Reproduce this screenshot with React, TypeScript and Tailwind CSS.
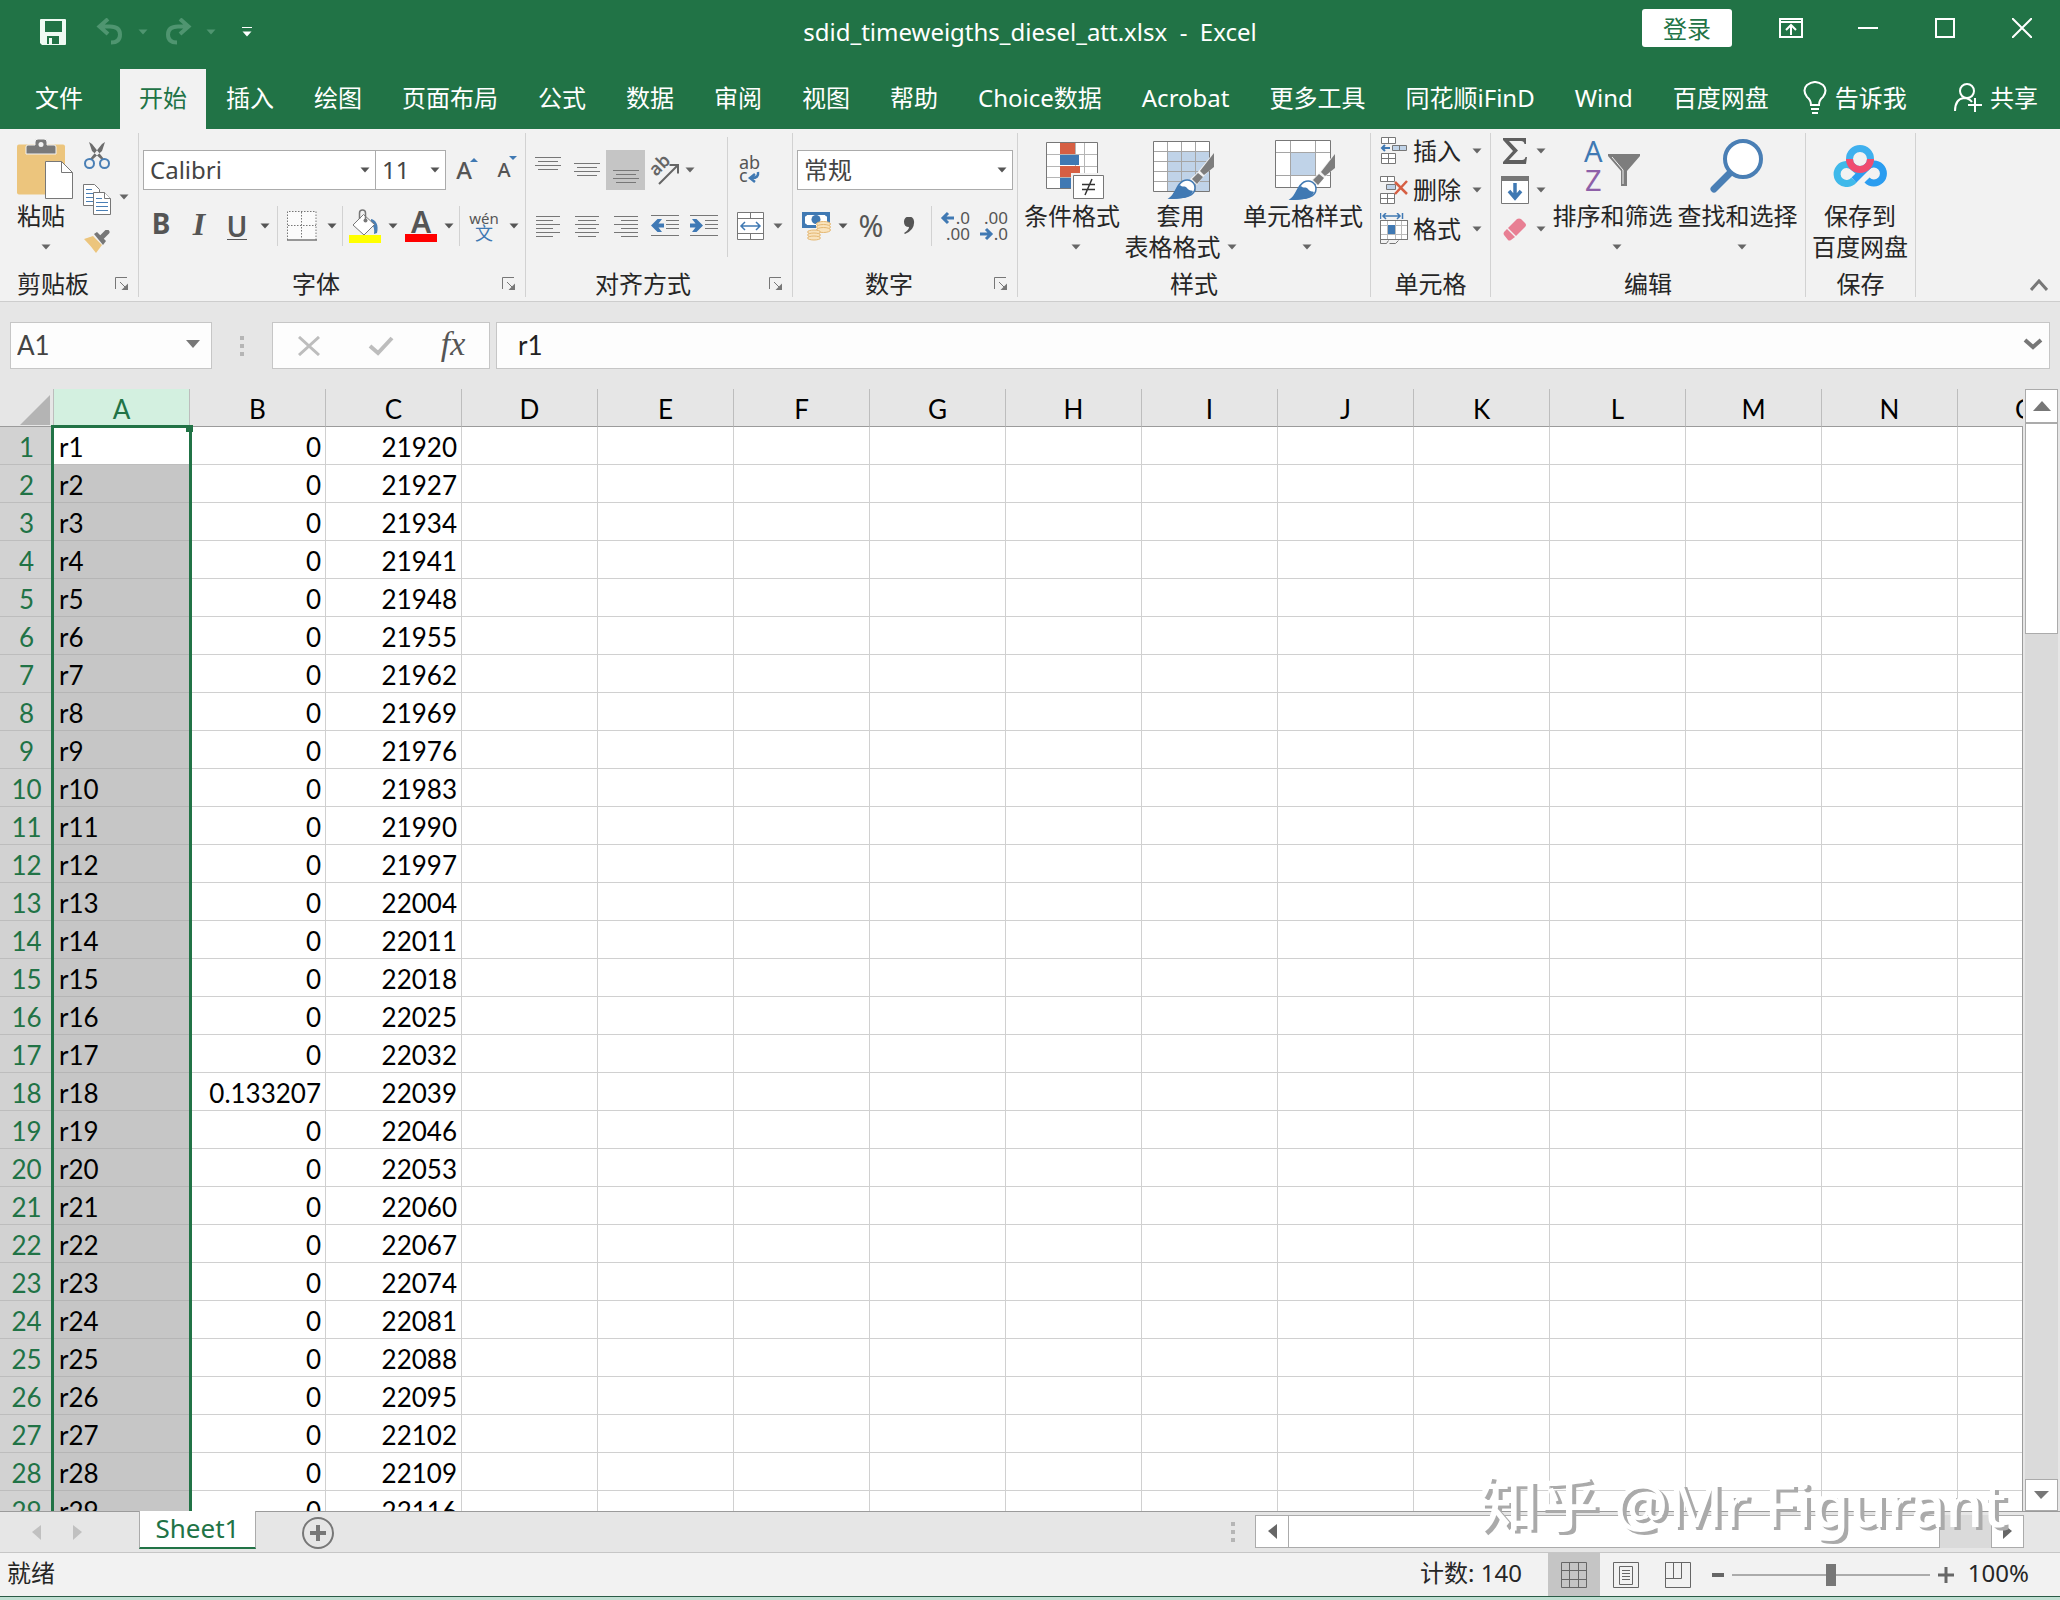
import type { ReactNode } from 'react'
import clsx from 'clsx'

const TABS = [
    '插入',
    '绘图',
    '页面布局',
    '公式',
    '数据',
    '审阅',
    '视图',
    '帮助',
    'Choice数据',
    'Acrobat',
    '更多工具',
    '同花顺iFinD',
    'Wind',
    '百度网盘',
]

const COLUMNS = ['A', 'B', 'C', 'D', 'E', 'F', 'G', 'H', 'I', 'J', 'K', 'L', 'M', 'N', 'O']

/* Weekly dates as serial numbers, one weight per row */
const ROWS = Array.from({ length: 29 }, (_, i) => ({
    name: `r${i + 1}`,
    weight: i === 17 ? '0.133207' : '0',
    date: String(21920 + i * 7),
}))

/**
 * Small down arrow used for all drop-downs.
 */
function Caret({ className }: { className?: string }) {
    return (
        <svg width="10" height="6" viewBox="0 0 10 6" className={clsx('shrink-0', className)} aria-hidden="true">
            <path d="M0.5 0.5h9L5 5.5z" fill="currentColor" />
        </svg>
    )
}

function Separator({ className }: { className?: string }) {
    return <div className={clsx('h-10 w-px shrink-0 bg-[#d2d2d2]', className)} />
}

/**
 * A small ribbon button.
 */
function Tool({ label, className, children }: { label: string; className?: string; children: ReactNode }) {
    return (
        <button type="button" aria-label={label} className={clsx('flex h-10 shrink-0 items-center justify-center', className)}>
            {children}
        </button>
    )
}

/**
 * A tall ribbon button with an icon and two lines below it.
 */
function BigTool({ icon, className, children }: { icon: ReactNode; className?: string; children: ReactNode }) {
    return (
        <button type="button" className={clsx('flex shrink-0 flex-col items-center leading-[31px] whitespace-nowrap', className)}>
            <span className="flex h-[63px] items-center justify-center">{icon}</span>
            {children}
        </button>
    )
}

function CaretLine() {
    return (
        <span className="flex h-[31px] items-center pl-2 text-[#666]">
            <Caret />
        </span>
    )
}

/**
 * A named section of the ribbon.
 */
function Group({
    title,
    launcher = false,
    className,
    children,
}: {
    title: string
    launcher?: boolean
    className?: string
    children: ReactNode
}) {
    return (
        <section aria-label={title} className={clsx('flex shrink-0 flex-col border-r border-[#d2d2d2]', className)}>
            <div className="flex h-[134px]">{children}</div>
            <div className="flex h-[30px] items-center pt-1 leading-[26px]">
                <h2 className="flex-1 text-center text-[#262626]">{title}</h2>
                {launcher && (
                    <button type="button" aria-label={`${title}设置`} className="flex w-8 justify-center">
                        <svg width="14" height="14" viewBox="0 0 14 14" fill="none" stroke="#777" aria-hidden="true">
                            <path d="M0.5 12V0.5H12M5 5l6 6" />
                            <path d="M13 6.5V13H6.5z" fill="#777" stroke="none" />
                        </svg>
                    </button>
                )}
            </div>
        </section>
    )
}

function Combo({ label, value, className }: { label: string; value: string; className?: string }) {
    return (
        <div className={clsx('relative h-10 border border-[#ababab] bg-white', className)}>
            <select aria-label={label} defaultValue={value} className="h-full w-full appearance-none bg-transparent pl-[6px] text-[#444] outline-none">
                <option>{value}</option>
            </select>
            <Caret className="pointer-events-none absolute top-4 right-[5px]" />
        </div>
    )
}

/* Horizontal strokes given as [x1, x2, y] */
function Lines({ lines }: { lines: number[][] }) {
    return (
        <svg width="26" height="26" viewBox="0 0 26 26" stroke="#777" aria-hidden="true">
            {lines.map(([x1, x2, y]) => (
                <path key={y} d={`M${x1} ${y}.5H${x2}`} />
            ))}
        </svg>
    )
}

function IndentIcon({ inward = false }: { inward?: boolean }) {
    return (
        <svg width="28" height="22" viewBox="0 0 28 22" aria-hidden="true">
            <path d="M0 .5h28M15 5.5h13M15 9.5h13M15 13.5h13M0 20.5h28" stroke="#777" />
            {inward ? (
                <path d="M0 8.5h5.500L2 4h4.500L13 10.500 6.500 17H2l3.500-4.500H0z" fill="#3f79b5" />
            ) : (
                <path d="M13 8.500H7.500L11 4H6.500L0 10.500 6.500 17H11l-3.500-4.500H13z" fill="#3f79b5" />
            )}
        </svg>
    )
}

function Brush() {
    return (
        <g>
            <path d="M61 11v14L50 36l-6 8-7-6 7-6z" fill="#f2f2f2" />
            <path d="M61 12v14L51 34l-4-4z" fill="#7d7d7d" />
            <path d="M45 32l5 4-6 7-5-5z" fill="#7d7d7d" />
            <path d="M17 57c6-4 6-13 13-17 6-3 12 1 12 7 0 8-9 10-25 10z" fill="#fff" stroke="#4079b3" strokeWidth="1.500" />
            <path d="M15 58c8-4 7-12 12-14 2 3 5 0 7 3 2 3 4 2 6 3-2 7-12 8-25 8z" fill="#4079b3" />
        </g>
    )
}

function PasteIcon() {
    return (
        <svg width="56" height="60" viewBox="0 0 56 60" aria-hidden="true">
            <rect y="5.500" width="48" height="50" rx="2" fill="#ecc57d" />
            <path d="M9 15V8q0-2 2-2h7V3q0-3 3-3h6q3 0 3 3v3h7q2 0 2 2v7z" fill="#7a7a7a" stroke="#f2f2f2" />
            <circle cx="24" cy="5.500" r="2.500" fill="#f2f2f2" />
            <path d="M28.500 22.500h16l11 11v26h-27z" fill="#fff" stroke="#777" />
            <path d="M44.500 22.500v11h11" fill="none" stroke="#777" />
        </svg>
    )
}

function CutIcon() {
    return (
        <svg width="26" height="29" viewBox="0 0 26 29" fill="none" aria-hidden="true">
            <path d="M5 1l3 9 10 9 2-1L8 3zM21 1l-3 9-10 9-2-1L18 3z" fill="#6d6d6d" />
            <circle cx="5.500" cy="22.500" r="4.500" stroke="#4a7fb5" strokeWidth="2" />
            <circle cx="20.500" cy="22.500" r="4.500" stroke="#4a7fb5" strokeWidth="2" />
        </svg>
    )
}

function CopyIcon() {
    return (
        <svg width="28" height="31" viewBox="0 0 28 31" fill="#fff" stroke="#777" aria-hidden="true">
            <path d="M.5.500h11l5 5v16H.5z" />
            <path d="M3 5.500h6M3 9.500h7M3 13.500h7M3 17.500h7" stroke="#4a7fb5" />
            <path d="M10.500 8.500h11l6 6v16h-17z" />
            <path d="M21.500 8.500v6h6" />
            <path d="M13 14.500h6M13 18.500h12M13 22.500h12M13 26.500h12" stroke="#4a7fb5" />
        </svg>
    )
}

function PainterIcon() {
    return (
        <svg width="26" height="23" viewBox="0 0 26 23" aria-hidden="true">
            <path d="M0 9l9-3 9 9-6 8q-5-7-12-14z" fill="#ecc57d" />
            <path d="M10 4l3-2 9 9-3 4z" fill="#777" />
            <path d="M17 8l6-6" stroke="#777" strokeWidth="5" strokeLinecap="round" />
        </svg>
    )
}

function FontSizeIcon({ grow = false }: { grow?: boolean }) {
    return (
        <span className={clsx('flex items-end pl-0.5 font-medium text-[#555]', grow ? 'text-2xl' : 'text-xl')}>
            A
            <svg width="8" height="28" viewBox="0 0 8 28" className="-ml-0.5" aria-hidden="true">
                <path d={grow ? 'M0 4l4-4 4 4z' : 'M0 0h8L4 4z'} fill="#4079b3" />
            </svg>
        </span>
    )
}

function BorderIcon() {
    return (
        <svg width="30" height="30" viewBox="0 0 30 30" aria-hidden="true">
            <path d="M.5.500h29v28H.5z" fill="#fbfbfb" />
            <path d="M.5 29V.500h28.500V29M14.500 1v27M1 14.500h28" fill="none" stroke="#777" strokeDasharray="1.500 1.500" />
            <path d="M0 29h30" stroke="#777" strokeWidth="1.500" />
        </svg>
    )
}

function FillIcon() {
    return (
        <svg width="32" height="34" viewBox="0 0 32 34" aria-hidden="true">
            <path d="M22 10c5 1 8 6 6 14l-3 1q1-7-3-11z" fill="#4a7fb5" />
            <path d="M14.500 5.500l11 10L15 26 4 16z" fill="#fff" stroke="#777" />
            <path d="M10.500 10V4q0-3 3-3 3 0 3 3v7" fill="none" stroke="#777" strokeWidth="1.500" />
            <circle cx="16.500" cy="11.500" r="2" fill="#777" />
            <path d="M0 26h32v8H0z" fill="#ff0" />
        </svg>
    )
}

function OrientationIcon() {
    return (
        <svg width="30" height="30" viewBox="0 0 30 30" className="overflow-visible" aria-hidden="true">
            <text x="6" y="22" transform="rotate(-45 6 22)" fontSize="18" fontWeight="600" fill="#666">
                ab
            </text>
            <path d="M9 29L28 10M19.500 10H28v8.500" fill="none" stroke="#666" strokeWidth="2" />
        </svg>
    )
}

function WrapIcon() {
    return (
        <svg width="22" height="30" viewBox="0 0 22 30" className="overflow-visible" aria-hidden="true">
            <text x="0" y="14" fontSize="18" fill="#555">
                ab
            </text>
            <text x="0" y="27" fontSize="18" fill="#555">
                c
            </text>
            <path d="M19 17q1 6-6 6M16 19l-5 4 5 4" fill="none" stroke="#4079b3" strokeWidth="2.500" />
        </svg>
    )
}

function MergeIcon() {
    return (
        <svg width="27" height="28" viewBox="0 0 27 28" aria-hidden="true">
            <path d="M.5.500h26v27H.500zM.5 6.500h26M.5 21.500h26M13.500.500v6M13.500 21.500v6" fill="#fff" stroke="#777" />
            <path d="M4 14h19M8 10l-4 4 4 4M19 10l4 4-4 4" fill="none" stroke="#4079b3" strokeWidth="1.500" />
        </svg>
    )
}

function MoneyIcon() {
    return (
        <svg width="30" height="30" viewBox="0 0 30 30" aria-hidden="true">
            <path d="M1.500 2.500h25v13h-25z" fill="#fff" stroke="#4079b3" strokeWidth="3" />
            <path d="M1 2h5q-1 4-5 4zM27 2h-5q1 4 5 4zM1 16h5q-1-4-5-4z" fill="#4079b3" />
            <circle cx="14" cy="8.500" r="4.500" fill="#4079b3" />
            <path d="M14 12h15v12H14z" fill="#f2f2f2" />
            {[13, 16, 19].map((y) => (
                <ellipse key={y} cx="21.500" cy={y} rx="7" ry="2.500" fill="#f9e3bd" stroke="#e5b873" />
            ))}
            {[21, 24, 27].map((y) => (
                <ellipse key={y} cx="12" cy={y} rx="6.500" ry="2" fill="#f9e3bd" stroke="#e5b873" />
            ))}
        </svg>
    )
}

function DecimalIcon({ increase = false }: { increase?: boolean }) {
    return (
        <svg width="30" height="30" viewBox="0 0 30 30" fontSize="17" fill="#555" className="overflow-visible" aria-hidden="true">
            <text x="29" y="13" textAnchor="end">
                {increase ? '.0' : '.00'}
            </text>
            <text x="29" y="29" textAnchor="end">
                {increase ? '.00' : '.0'}
            </text>
            {increase ? (
                <path d="M13 7H3M7 2L2 7l5 5" fill="none" stroke="#4079b3" strokeWidth="3" />
            ) : (
                <path d="M1 23h10M7 18l5 5-5 5" fill="none" stroke="#4079b3" strokeWidth="3" />
            )}
        </svg>
    )
}

function ConditionalIcon() {
    return (
        <svg width="58" height="58" viewBox="0 0 58 58" className="mt-1 ml-1.5" aria-hidden="true">
            <path d="M.5.500h51v46H.500z" fill="#fff" />
            <path d="M29.500 1v45M38.500 1v45M1 12.500h50M1 24.500h50M1 35.500h50" stroke="#b5b5b5" />
            <path d="M14 1h15v11H14zM14 24h20v11H14z" fill="#d65f43" />
            <path d="M14 13h19v10H14zM14 36h14v10H14z" fill="#4079b3" />
            <path d="M.5.500h51v46H.500z" fill="none" stroke="#777" />
            <path d="M25 31h34v28H25z" fill="#f2f2f2" />
            <path d="M27.500 33.500h30v23h-30z" fill="#fff" stroke="#777" />
            <path d="M36 42.500h13M36 47.500h13M46 37l-7 16" stroke="#333" strokeWidth="1.500" />
        </svg>
    )
}

function TableFormatIcon() {
    return (
        <svg width="62" height="60" viewBox="0 0 62 60" className="mt-1 ml-1.5" aria-hidden="true">
            <path d="M.5.500h56v50H.500z" fill="#fff" />
            <path d="M14.500 10.500h42v40h-42z" fill="#c0d3e8" />
            <path d="M.5 10.500h56M.5 20.500h56M.5 30.500h56M.5 40.500h56M14.500.500v50M28.500.500v50M42.500.500v50" stroke="#a5a5a5" />
            <path d="M.5.500h56v50H.500z" fill="none" stroke="#777" />
            <Brush />
        </svg>
    )
}

function CellStyleIcon() {
    return (
        <svg width="62" height="62" viewBox="0 0 62 62" className="mt-1 ml-1.5" aria-hidden="true">
            <path d="M.5.500h55v47H.500z" fill="#fff" />
            <path d="M15.500 12.500h25v23h-25z" fill="#c0d3e8" />
            <path d="M.5 12.500h55M.5 35.500h55M15.500.500v47M40.500.500v47" stroke="#a5a5a5" />
            <path d="M.5.500h55v47H.500z" fill="none" stroke="#777" />
            <g transform="translate(-1 2)">
                <Brush />
            </g>
        </svg>
    )
}

function InsertCellsIcon() {
    return (
        <svg width="28" height="28" viewBox="0 0 28 28" fill="#fff" stroke="#777" aria-hidden="true">
            <path d="M1.500.500h14v6h-14zM8.500.500v6M1.500 16.500h14v10h-14zM8.500 16.500v10M1.500 21.500h14" />
            <path d="M12.500 8.500h14v5h-14zM19.500 8.500v5" fill="#c0d3e8" />
            <path d="M2 11h8M5 8l-3 3 3 3" fill="none" stroke="#4079b3" strokeWidth="2" />
        </svg>
    )
}

function DeleteCellsIcon() {
    return (
        <svg width="28" height="28" viewBox="0 0 28 28" fill="#fff" stroke="#777" aria-hidden="true">
            <path d="M.5.500h14v5H.500zM7.500.500v5M.5 17.500h14v10H.500zM7.500 17.500v10M.5 22.500h14" />
            <path d="M6.500 8.500h9v5h-9z" fill="#c0d3e8" />
            <path d="M15 6l12 12M27 5L15 18" stroke="#d65f43" strokeWidth="2.500" />
        </svg>
    )
}

function FormatCellsIcon() {
    return (
        <svg width="28" height="32" viewBox="0 0 28 32" fill="#fff" stroke="#777" aria-hidden="true">
            <path d="M.5 7.500h27v19H.500z" />
            <path d="M.5 12.500h27M.5 21.500h27M7.500 7.500v19M15.500 7.500v19M21.500 7.500v19" stroke="#bbb" />
            <path d="M.5 7.500h27v19H.500zM.5 26.500v4h6l2-3M9.500 30.500h6l3-3" fill="none" />
            <path d="M8 12h7v9H8z" fill="#4079b3" stroke="none" />
            <path d="M.5 0v6M22.500 0v6M3 3h17M6 0L3 3l3 3M17 0l3 3-3 3" fill="none" stroke="#4079b3" strokeWidth="1.500" />
        </svg>
    )
}

function SumIcon() {
    return (
        <svg width="24" height="26" viewBox="0 0 24 26" aria-hidden="true">
            <path d="M0 0h23v6h-1.500Q21 3 18 3H6l9 9.500L6 22h13q3 0 3.500-3H24l-1 7H0v-2l10-11L0 2z" fill="#5f5f5f" />
        </svg>
    )
}

function FillDownIcon() {
    return (
        <svg width="28" height="28" viewBox="0 0 28 28" aria-hidden="true">
            <path d="M.5.500h27v27H.500z" fill="#fff" stroke="#777" />
            <path d="M0 0h28v5H0z" fill="#777" />
            <path d="M14 7v14M8 15l6 7 6-7" fill="none" stroke="#4079b3" strokeWidth="3.500" />
        </svg>
    )
}

function EraserIcon() {
    return (
        <svg width="24" height="23" viewBox="0 0 24 23" fill="#e87f93" aria-hidden="true">
            <path d="M14 1q2-1 4 0l4 4q2 2 0 4l-9 9-8-8z" />
            <path d="M4 11l8 8-4 3q-2 1-3 0l-4-5q-1-1 0-3z" />
        </svg>
    )
}

function SortFilterIcon() {
    return (
        <svg width="56" height="54" viewBox="0 0 56 54" className="mr-0.5 mb-1 overflow-visible" aria-hidden="true">
            <text x="0" y="22" fontSize="29" fill="#4079b3">
                A
            </text>
            <text x="1" y="51" fontSize="29" fill="#8e60a8">
                Z
            </text>
            <path d="M24 14h32v2L43 31v15h-6V31L24 16z" fill="#7d7d7d" />
            <path d="M28 17l11 13v14" fill="none" stroke="#f2f2f2" />
        </svg>
    )
}

function FindIcon() {
    return (
        <svg width="54" height="54" viewBox="0 0 54 54" className="mr-0.5 mb-1.5" aria-hidden="true">
            <path d="M22 32L4 50" stroke="#4a7fb5" strokeWidth="7" strokeLinecap="round" />
            <circle cx="33" cy="20" r="18" fill="#fff" stroke="#4a7fb5" strokeWidth="4" />
        </svg>
    )
}

function NetdiskIcon() {
    return (
        <svg width="54" height="42" viewBox="0 0 54 42" fill="none" strokeWidth="7" className="mb-1.5" aria-hidden="true">
            <path d="M21 35a9.500 9.500 0 1 1-1-13l8 7" stroke="#3fb9ea" />
            <path d="M34 35a9.500 9.500 0 1 0 0-13L21 35" stroke="#2b9df0" />
            <circle cx="27" cy="14" r="10.500" stroke="#3fb0ee" />
            <path d="M16.500 14a10.500 10.500 0 0 0 21 0" stroke="#f04c70" />
        </svg>
    )
}

function HistoryIcon() {
    return (
        <svg width="28" height="28" viewBox="0 0 28 28" fill="none" stroke="#4f9570" strokeWidth="4" aria-hidden="true">
            <path d="M12 1L3.500 8.500 12 16M4 8.500h10q10 0 10 8t-9 8" />
        </svg>
    )
}

function TitleBar() {
    return (
        <header className="grid h-[69px] grid-cols-[1fr_auto_1fr] text-white">
            <div className="flex h-16 items-center pl-10">
                <button type="button" aria-label="保存" className="mr-[30px]">
                    <svg width="26" height="26" viewBox="0 0 26 26" aria-hidden="true">
                        <path d="M1 0h24q1 0 1 1v24q0 1-1 1H2l-2-2V1q0-1 1-1z" fill="#effaf3" />
                        <path d="M5 2h17v11H5zM7 17h12v8h-7v-6H9v6H7z" fill="#217346" />
                    </svg>
                </button>
                <button type="button" aria-label="撤消" className="mr-4 flex items-center gap-[14px] text-[#4f9570]">
                    <HistoryIcon />
                    <Caret />
                </button>
                <button type="button" aria-label="恢复" className="mr-6 flex items-center gap-[14px] text-[#4f9570]">
                    <span className="-scale-x-100">
                        <HistoryIcon />
                    </span>
                    <Caret />
                </button>
                <button type="button" aria-label="自定义快速访问工具栏" className="flex flex-col items-center gap-[3px] pl-0.5">
                    <span className="h-px w-[10px] bg-white" />
                    <Caret />
                </button>
            </div>
            <h1 className="flex h-16 items-center whitespace-pre">sdid_timeweigths_diesel_att.xlsx  -  Excel</h1>
            <div className="flex h-14 items-center justify-end">
                <button type="button" className="mr-5 h-[38px] w-[90px] rounded-[3px] bg-white pt-0.5 leading-9 text-[#217346]">
                    登录
                </button>
                <button type="button" aria-label="功能区显示选项" className="flex w-[77px] justify-center">
                    <svg width="24" height="20" viewBox="0 0 24 20" fill="none" stroke="#fff" strokeWidth="2" aria-hidden="true">
                        <path d="M1 1h22v18H1zM1 4h22M12 17V8M7 12l5-5 5 5" />
                    </svg>
                </button>
                <button type="button" aria-label="最小化" className="flex w-[77px] justify-center">
                    <span className="h-0.5 w-5 bg-white" />
                </button>
                <button type="button" aria-label="最大化" className="flex w-[77px] justify-center">
                    <span className="size-5 border-2 border-white" />
                </button>
                <button type="button" aria-label="关闭" className="flex w-[77px] justify-center">
                    <svg width="20" height="20" viewBox="0 0 20 20" stroke="#fff" strokeWidth="2" aria-hidden="true">
                        <path d="M0 0l20 20M20 0L0 20" />
                    </svg>
                </button>
            </div>
        </header>
    )
}

function TabBar() {
    return (
        <nav className="flex h-[60px] text-white">
            <button type="button" className="mr-0.5 w-[118px] pb-[3px]">
                文件
            </button>
            <button type="button" className="w-[86px] bg-[#f2f2f2] pb-[3px] text-[#217346]">
                开始
            </button>
            {TABS.map((tab) => (
                <button key={tab} type="button" className="px-5 pb-[3px] whitespace-nowrap">
                    {tab}
                </button>
            ))}
            <button type="button" className="ml-[14px] flex items-center gap-2 pb-0.5 whitespace-nowrap">
                <svg width="24" height="34" viewBox="0 0 24 34" fill="none" stroke="#fff" strokeWidth="2" aria-hidden="true">
                    <path d="M8 24q0-5-4-8Q-1 9 4 4q8-6 16 0 5 5 0 12-4 3-4 8zM8 28h8M9 32h6" />
                </svg>
                告诉我
            </button>
            <button type="button" className="mr-[22px] ml-auto flex items-center gap-2 pb-[3px] whitespace-nowrap">
                <svg width="28" height="30" viewBox="0 0 28 30" fill="none" stroke="#fff" strokeWidth="2" aria-hidden="true">
                    <circle cx="13" cy="8" r="7" />
                    <path d="M1 28q0-12 9-13 5 0 8 4M21 15v14M14 22h14" />
                </svg>
                共享
            </button>
        </nav>
    )
}

function Ribbon() {
    return (
        <div className="flex border-b border-[#cdcdcd] bg-[#f2f2f2] py-1 text-[#262626]">
            <Group title="剪贴板" launcher className="w-[139px]">
                <button type="button" className="ml-[17px] flex w-[60px] flex-col items-start pt-1 leading-[31px]">
                    <span className="flex h-[63px] items-center">
                        <PasteIcon />
                    </span>
                    粘贴
                    <span className="flex h-[31px] items-center pl-6 text-[#666]">
                        <Caret />
                    </span>
                </button>
                <div className="flex flex-col text-[#666]">
                    <Tool label="剪切" className="mt-0.5 w-10">
                        <CutIcon />
                    </Tool>
                    <div className="flex items-center">
                        <Tool label="复制" className="mt-1 w-10">
                            <CopyIcon />
                        </Tool>
                        <Caret className="ml-0.5" />
                    </div>
                    <Tool label="格式刷" className="mt-0.5 w-10">
                        <PainterIcon />
                    </Tool>
                </div>
            </Group>

            <Group title="字体" launcher className="w-[387px]">
                <div className="flex flex-col gap-4 pt-[17px] pl-1 text-[#555]">
                    <div className="flex">
                        <Combo label="字体" value="Calibri" className="w-[233px]" />
                        <Combo label="字号" value="11" className="-ml-px w-[71px]" />
                        <Tool label="增大字号" className="w-10">
                            <FontSizeIcon grow />
                        </Tool>
                        <Tool label="减小字号" className="w-10">
                            <FontSizeIcon />
                        </Tool>
                    </div>
                    <div className="flex">
                        <Tool label="加粗" className="w-9 pb-1 text-[28px] font-bold">
                            B
                        </Tool>
                        <Tool label="倾斜" className="w-10 pb-1 font-['Liberation_Serif',serif] text-[32px] font-bold italic">
                            I
                        </Tool>
                        <Tool label="下划线" className="w-9">
                            <span className="border-b border-[#555] text-[28px] leading-[26px] font-semibold">U</span>
                        </Tool>
                        <Tool label="下划线选项" className="w-5">
                            <Caret />
                        </Tool>
                        <Separator className="mx-0.5" />
                        <Tool label="边框" className="w-11">
                            <BorderIcon />
                        </Tool>
                        <Tool label="边框选项" className="w-4">
                            <Caret />
                        </Tool>
                        <Separator className="mx-0.5" />
                        <Tool label="填充颜色" className="w-10">
                            <FillIcon />
                        </Tool>
                        <Tool label="填充颜色选项" className="w-4">
                            <Caret />
                        </Tool>
                        <Tool label="字体颜色" className="w-10">
                            <span className="w-8 border-b-8 border-[#f00] text-[30px] leading-6 font-semibold">A</span>
                        </Tool>
                        <Tool label="字体颜色选项" className="w-4">
                            <Caret />
                        </Tool>
                        <Separator className="mx-0.5" />
                        <Tool label="拼音" className="w-11 flex-col text-[15px] leading-[14px]">
                            wén
                            <span className="text-lg leading-4 text-[#4079b3]">文</span>
                        </Tool>
                        <Tool label="拼音选项" className="w-4">
                            <Caret />
                        </Tool>
                    </div>
                </div>
            </Group>

            <Group title="对齐方式" launcher className="w-[267px]">
                <div className="flex flex-col gap-4 pt-[17px] pl-0.5 text-[#666]">
                    <div className="flex">
                        <Tool label="顶端对齐" className="w-[39px]">
                            <Lines lines={[[0, 26, 0], [3, 23, 4], [0, 26, 8], [3, 23, 12]]} />
                        </Tool>
                        <Tool label="垂直居中" className="w-[39px]">
                            <Lines lines={[[0, 26, 6], [3, 23, 10], [0, 26, 14], [3, 23, 18]]} />
                        </Tool>
                        <Tool label="底端对齐" className="w-[39px] bg-[#c5c5c5]">
                            <Lines lines={[[0, 26, 13], [3, 23, 17], [0, 26, 21], [3, 23, 25]]} />
                        </Tool>
                        <Tool label="方向" className="w-[39px]">
                            <OrientationIcon />
                        </Tool>
                        <Tool label="方向选项" className="w-3">
                            <Caret />
                        </Tool>
                    </div>
                    <div className="flex">
                        <Tool label="左对齐" className="w-[39px]">
                            <Lines lines={[[1, 25, 3], [1, 18, 7], [1, 25, 11], [1, 18, 15], [1, 25, 19], [1, 18, 23]]} />
                        </Tool>
                        <Tool label="居中" className="w-[39px]">
                            <Lines lines={[[1, 25, 3], [4, 22, 7], [1, 25, 11], [4, 22, 15], [1, 25, 19], [4, 22, 23]]} />
                        </Tool>
                        <Tool label="右对齐" className="w-[39px]">
                            <Lines lines={[[1, 25, 3], [8, 25, 7], [1, 25, 11], [8, 25, 15], [1, 25, 19], [8, 25, 23]]} />
                        </Tool>
                        <Tool label="减少缩进量" className="w-[39px]">
                            <IndentIcon />
                        </Tool>
                        <Tool label="增加缩进量" className="w-[39px]">
                            <IndentIcon inward />
                        </Tool>
                    </div>
                </div>
                <div className="mt-1 mr-0.5 ml-1 h-[120px] w-px bg-[#d2d2d2]" />
                <div className="flex flex-col gap-4 pt-[17px] text-[#666]">
                    <Tool label="自动换行" className="w-10">
                        <WrapIcon />
                    </Tool>
                    <div className="flex">
                        <Tool label="合并后居中" className="w-10">
                            <MergeIcon />
                        </Tool>
                        <Tool label="合并选项" className="w-4">
                            <Caret />
                        </Tool>
                    </div>
                </div>
            </Group>

            <Group title="数字" launcher className="w-[225px]">
                <div className="flex flex-col gap-4 pt-[17px] pl-1 text-[#555]">
                    <Combo label="数字格式" value="常规" className="w-[216px]" />
                    <div className="flex">
                        <Tool label="会计数字格式" className="w-10">
                            <MoneyIcon />
                        </Tool>
                        <Tool label="会计数字格式选项" className="w-3">
                            <Caret />
                        </Tool>
                        <Tool label="百分比样式" className="w-11 text-[30px]">
                            %
                        </Tool>
                        <Tool label="千位分隔样式" className="w-8">
                            <svg width="12" height="18" viewBox="0 0 12 18" aria-hidden="true">
                                <path d="M1 5a5 5 0 0 1 10-1q1 9-9 13l-1-1q5-3 5-6-5 0-5-5z" fill="#555" />
                            </svg>
                        </Tool>
                        <Separator className="mx-1.5" />
                        <Tool label="增加小数位数" className="w-9">
                            <DecimalIcon increase />
                        </Tool>
                        <Tool label="减少小数位数" className="w-10">
                            <DecimalIcon />
                        </Tool>
                    </div>
                </div>
            </Group>

            <Group title="样式" className="w-[353px]">
                <div className="flex pt-1 pl-1">
                    <BigTool icon={<ConditionalIcon />} className="w-[100px]">
                        条件格式
                        <CaretLine />
                    </BigTool>
                    <BigTool icon={<TableFormatIcon />} className="w-[117px]">
                        套用
                        <span className="flex items-center gap-1.5">
                            表格格式
                            <Caret className="text-[#666]" />
                        </span>
                    </BigTool>
                    <BigTool icon={<CellStyleIcon />} className="w-32">
                        单元格样式
                        <CaretLine />
                    </BigTool>
                </div>
            </Group>

            <Group title="单元格" className="w-[120px]">
                <div className="flex flex-col pl-[9px]">
                    {[
                        { label: '插入', icon: <InsertCellsIcon /> },
                        { label: '删除', icon: <DeleteCellsIcon /> },
                        { label: '格式', icon: <FormatCellsIcon /> },
                    ].map(({ label, icon }) => (
                        <button key={label} type="button" className="flex h-[39px] items-center gap-[5px] pb-[3px] whitespace-nowrap">
                            {icon}
                            {label}
                            <Caret className="ml-1.5 text-[#666]" />
                        </button>
                    ))}
                </div>
            </Group>

            <Group title="编辑" className="w-[315px]">
                <div className="flex w-[59px] flex-col pl-[9px] text-[#666]">
                    {[
                        { label: '自动求和', icon: <SumIcon /> },
                        { label: '填充', icon: <FillDownIcon /> },
                        { label: '清除', icon: <EraserIcon /> },
                    ].map(({ label, icon }) => (
                        <button key={label} type="button" aria-label={label} className="flex h-[39px] items-center gap-1.5 pb-[3px]">
                            <span className="flex w-[30px] justify-center">{icon}</span>
                            <Caret />
                        </button>
                    ))}
                </div>
                <div className="flex pt-1">
                    <BigTool icon={<SortFilterIcon />} className="w-[125px]">
                        排序和筛选
                        <CaretLine />
                    </BigTool>
                    <BigTool icon={<FindIcon />} className="w-[125px]">
                        查找和选择
                        <CaretLine />
                    </BigTool>
                </div>
            </Group>

            <Group title="保存" className="w-[110px]">
                <div className="flex pt-1">
                    <BigTool icon={<NetdiskIcon />} className="w-[108px]">
                        保存到
                        <span>百度网盘</span>
                    </BigTool>
                </div>
            </Group>

            <button type="button" aria-label="折叠功能区" className="mt-auto mr-3 mb-1.5 ml-auto">
                <svg width="18" height="12" viewBox="0 0 18 12" fill="none" stroke="#777" strokeWidth="3" aria-hidden="true">
                    <path d="M1 11l8-9 8 9" />
                </svg>
            </button>
        </div>
    )
}

function Dots() {
    return (
        <span className="flex flex-col gap-1" aria-hidden="true">
            <span className="size-1 bg-[#b5b5b5]" />
            <span className="size-1 bg-[#b5b5b5]" />
            <span className="size-1 bg-[#b5b5b5]" />
        </span>
    )
}

function FormulaBar() {
    return (
        <div className="flex px-[10px] py-5 font-['Lato','Noto_Sans_CJK_SC',sans-serif] text-[26px] text-[#444]">
            <div className="flex h-[47px] w-[202px] items-center border border-[#c6c6c6] bg-[#fdfdfd]">
                <input aria-label="名称框" defaultValue="A1" className="w-full min-w-0 bg-transparent pl-1.5 outline-none" />
                <button type="button" aria-label="名称列表" className="px-[11px] pb-1 text-[#777]">
                    <svg width="14" height="8" viewBox="0 0 14 8" aria-hidden="true">
                        <path d="M0 0h14L7 8z" fill="currentColor" />
                    </svg>
                </button>
            </div>
            <div className="flex w-[60px] items-center justify-center">
                <Dots />
            </div>
            <div className="flex h-[47px] w-[218px] items-center justify-around border border-[#c6c6c6] bg-[#fdfdfd]">
                <button type="button" aria-label="取消">
                    <svg width="24" height="20" viewBox="0 0 24 20" stroke="#bdbdbd" strokeWidth="3" aria-hidden="true">
                        <path d="M2 1l20 18M22 1L2 19" />
                    </svg>
                </button>
                <button type="button" aria-label="输入">
                    <svg width="26" height="20" viewBox="0 0 26 20" fill="none" stroke="#bdbdbd" strokeWidth="4" aria-hidden="true">
                        <path d="M2 10l8 7L24 2" />
                    </svg>
                </button>
                <button type="button" aria-label="插入函数" className="pb-1 font-['Liberation_Serif',serif] text-[34px] leading-8 text-[#555] italic">
                    fx
                </button>
            </div>
            <div className="ml-1.5 flex h-[47px] flex-1 items-center border border-[#c6c6c6] bg-[#fdfdfd]">
                <input aria-label="编辑栏" defaultValue="r1" className="min-w-0 flex-1 bg-transparent pl-[21px] text-[#222] outline-none" />
                <button type="button" aria-label="展开编辑栏" className="px-1.5 pb-1">
                    <svg width="20" height="12" viewBox="0 0 20 12" fill="none" stroke="#777" strokeWidth="4" aria-hidden="true">
                        <path d="M2 2l8 7 8-7" />
                    </svg>
                </button>
            </div>
        </div>
    )
}

function Sheet() {
    return (
        <div className="relative flex-1 overflow-hidden font-['Lato',sans-serif] text-[26px] leading-none text-black">
            <table className="w-[2094px] table-fixed border-separate border-spacing-0">
                <colgroup>
                    <col className="w-[54px]" />
                    {COLUMNS.map((column) => (
                        <col key={column} className="w-[136px]" />
                    ))}
                </colgroup>
                <thead>
                    <tr className="h-[38px]">
                        <th aria-label="全选" className="border-r border-b border-r-[#bdbdbd] border-b-[#9b9b9b] p-0 pt-1">
                            <svg width="30" height="30" viewBox="0 0 30 30" className="ml-5" aria-hidden="true">
                                <path d="M30 0v30H0z" fill="#b4b4b4" />
                            </svg>
                        </th>
                        {COLUMNS.map((column) => (
                            <th
                                key={column}
                                scope="col"
                                className={clsx(
                                    'border-r border-b border-r-[#bdbdbd] border-b-[#9b9b9b] p-0 pt-0.5 text-center font-normal',
                                    column === 'A' && 'bg-[#d3f0e0] text-[#217346]',
                                )}
                            >
                                {column}
                            </th>
                        ))}
                    </tr>
                </thead>
                <tbody className="bg-white">
                    {ROWS.map((row, i) => (
                        <tr key={row.name} className="h-[38px]">
                            <th
                                scope="row"
                                className="border-r border-b border-[#bdbdbd] bg-[#d2d2d2] p-0 pt-0.5 text-center font-normal text-[#217346]"
                            >
                                {i + 1}
                            </th>
                            <td
                                className={clsx(
                                    'border-r border-b border-r-white p-0 pt-0.5 pl-[5px] text-left',
                                    i === 0 ? 'border-b-[#bdbdbd]' : 'border-b-[#b5b5b5] bg-[#c6c6c6]',
                                )}
                            >
                                {row.name}
                            </td>
                            <td className="border-r border-b border-[#d0d0d0] p-0 pt-0.5 pr-1 text-right">{row.weight}</td>
                            <td className="border-r border-b border-[#d0d0d0] p-0 pt-0.5 pr-1 text-right">{row.date}</td>
                            {COLUMNS.slice(3).map((column) => (
                                <td key={column} className="border-r border-b border-[#d0d0d0] p-0" />
                            ))}
                        </tr>
                    ))}
                </tbody>
            </table>
            {/* Right edge of the cell area */}
            <div className="absolute top-[37px] right-0 bottom-0 w-px bg-[#9b9b9b]" />
            {/* Outline of the selected column */}
            <div className="pointer-events-none absolute top-9 bottom-0 left-[51px] w-[141px] border-3 border-b-0 border-[#217346]">
                <span className="absolute -top-[3px] -right-1 size-[7px] bg-[#217346]" />
            </div>
        </div>
    )
}

function VerticalScroll() {
    return (
        <div className="mr-0.5 ml-0.5 flex w-[33px] flex-col bg-[#dadada] text-[#777]">
            <button type="button" aria-label="向上滚动" className="flex h-[34px] items-center justify-center border border-[#ababab] bg-white">
                <svg width="18" height="10" viewBox="0 0 18 10" aria-hidden="true">
                    <path d="M0 10h18L9 0z" fill="currentColor" />
                </svg>
            </button>
            <div className="h-[211px] border border-[#ababab] bg-white" />
            <button type="button" aria-label="向下滚动" className="mt-auto flex h-8 items-center justify-center border border-[#ababab] bg-white">
                <svg width="15" height="8" viewBox="0 0 15 8" aria-hidden="true">
                    <path d="M0 0h15L7 8z" fill="currentColor" />
                </svg>
            </button>
        </div>
    )
}

function SheetTabs() {
    return (
        <div className="flex h-[41px] shrink-0 border-t border-[#9b9b9b]">
            <div className="flex w-[139px] items-center gap-8 pl-8 text-[#c0c0c0]">
                <button type="button" aria-label="上一个工作表">
                    <svg width="9" height="15" viewBox="0 0 9 15" aria-hidden="true">
                        <path d="M9 0v15L0 7z" fill="currentColor" />
                    </svg>
                </button>
                <button type="button" aria-label="下一个工作表">
                    <svg width="9" height="15" viewBox="0 0 9 15" aria-hidden="true">
                        <path d="M0 0v15l9-8z" fill="currentColor" />
                    </svg>
                </button>
            </div>
            <button
                type="button"
                className="-mt-px h-[38px] w-[117px] border-x border-b-2 border-x-[#ababab] border-b-[#217346] bg-white pb-[3px] text-[26px] leading-8 text-[#217346]"
            >
                Sheet1
            </button>
            <button type="button" aria-label="新工作表" className="ml-[46px] pt-0.5">
                <svg width="32" height="32" viewBox="0 0 32 32" fill="none" stroke="#777" aria-hidden="true">
                    <circle cx="16" cy="16" r="15" strokeWidth="2" />
                    <path d="M8 16h16M16 8v16" strokeWidth="4" />
                </svg>
            </button>
            <div className="ml-auto flex w-11 items-center justify-center">
                <Dots />
            </div>
            <div className="mt-[3px] mr-9 flex h-[33px] w-[769px] bg-[#dadada] text-[#666]">
                <button type="button" aria-label="向左滚动" className="flex w-[34px] items-center justify-center border border-[#ababab] bg-white">
                    <svg width="9" height="15" viewBox="0 0 9 15" aria-hidden="true">
                        <path d="M9 0v15L0 7z" fill="currentColor" />
                    </svg>
                </button>
                <div className="-ml-px w-[652px] border border-[#ababab] bg-white" />
                <button type="button" aria-label="向右滚动" className="ml-auto flex w-[33px] items-center justify-center border border-[#ababab] bg-white">
                    <svg width="9" height="15" viewBox="0 0 9 15" aria-hidden="true">
                        <path d="M0 0v15l9-8z" fill="currentColor" />
                    </svg>
                </button>
            </div>
        </div>
    )
}

function StatusBar() {
    return (
        <footer className="flex h-[45px] shrink-0 items-center border-t border-b border-t-[#c6c6c6] border-b-[#2b5b47] bg-[#f2f2f2] text-[#262626]">
            <span className="pb-[3px] pl-[7px]">就绪</span>
            <span className="mr-[26px] ml-auto pb-[3px]">计数: 140</span>
            <button type="button" aria-label="普通" className="flex h-full w-[52px] items-center justify-center bg-[#c5c5c5]">
                <svg width="26" height="26" viewBox="0 0 26 26" fill="none" stroke="#666" aria-hidden="true">
                    <path d="M.5.500h25v25H.500zM.5 8.500h25M.5 17.500h25M8.500.500v25M17.500.500v25" />
                </svg>
            </button>
            <button type="button" aria-label="页面布局" className="flex h-full w-[52px] items-center justify-center">
                <svg width="26" height="26" viewBox="0 0 26 26" fill="none" stroke="#666" aria-hidden="true">
                    <path d="M.5.500h25v25H.500zM6.500 4.500h13v18h-13zM9 8.500h8M9 11.500h8M9 14.500h8M9 17.500h8" />
                </svg>
            </button>
            <button type="button" aria-label="分页预览" className="flex h-full w-[52px] items-center justify-center">
                <svg width="26" height="26" viewBox="0 0 26 26" fill="none" stroke="#666" aria-hidden="true">
                    <path d="M.5.500h25v25H.500zM.5 16.500h16v-16M8.500.500v16" />
                </svg>
            </button>
            <button type="button" aria-label="缩小" className="flex w-7 justify-center">
                <span className="h-1 w-3 bg-[#666]" />
            </button>
            <input
                type="range"
                aria-label="显示比例"
                min="0"
                max="200"
                defaultValue="100"
                className="h-[22px] w-[198px] appearance-none bg-[linear-gradient(#ababab,#ababab)] bg-[length:100%_2px] bg-center bg-no-repeat [&::-webkit-slider-thumb]:h-[22px] [&::-webkit-slider-thumb]:w-[10px] [&::-webkit-slider-thumb]:appearance-none [&::-webkit-slider-thumb]:bg-[#777]"
            />
            <button type="button" aria-label="放大" className="flex w-8 justify-center">
                <svg width="16" height="16" viewBox="0 0 16 16" stroke="#666" strokeWidth="3" aria-hidden="true">
                    <path d="M0 8h16M8 0v16" />
                </svg>
            </button>
            <span className="mr-[31px] ml-1.5 pb-[3px]">100%</span>
        </footer>
    )
}

export default function App() {
    return (
        <div className="relative flex h-screen flex-col overflow-hidden bg-[#e6e6e6] font-['Noto_Sans','Noto_Sans_CJK_SC',sans-serif] text-2xl">
            <div className="bg-[#217346]">
                <TitleBar />
                <TabBar />
            </div>
            <Ribbon />
            <FormulaBar />
            <main className="flex min-h-0 flex-1">
                <Sheet />
                <VerticalScroll />
            </main>
            <SheetTabs />
            <StatusBar />
            <div className="h-[3px] shrink-0 bg-[#c0dfd2]" />
            <p className="pointer-events-none absolute right-[54px] bottom-[60px] text-[60px] leading-[72px] font-medium whitespace-nowrap text-white [text-shadow:4px_3px_0_#aaa]">
                知乎 @Mr Figurant
            </p>
        </div>
    )
}
